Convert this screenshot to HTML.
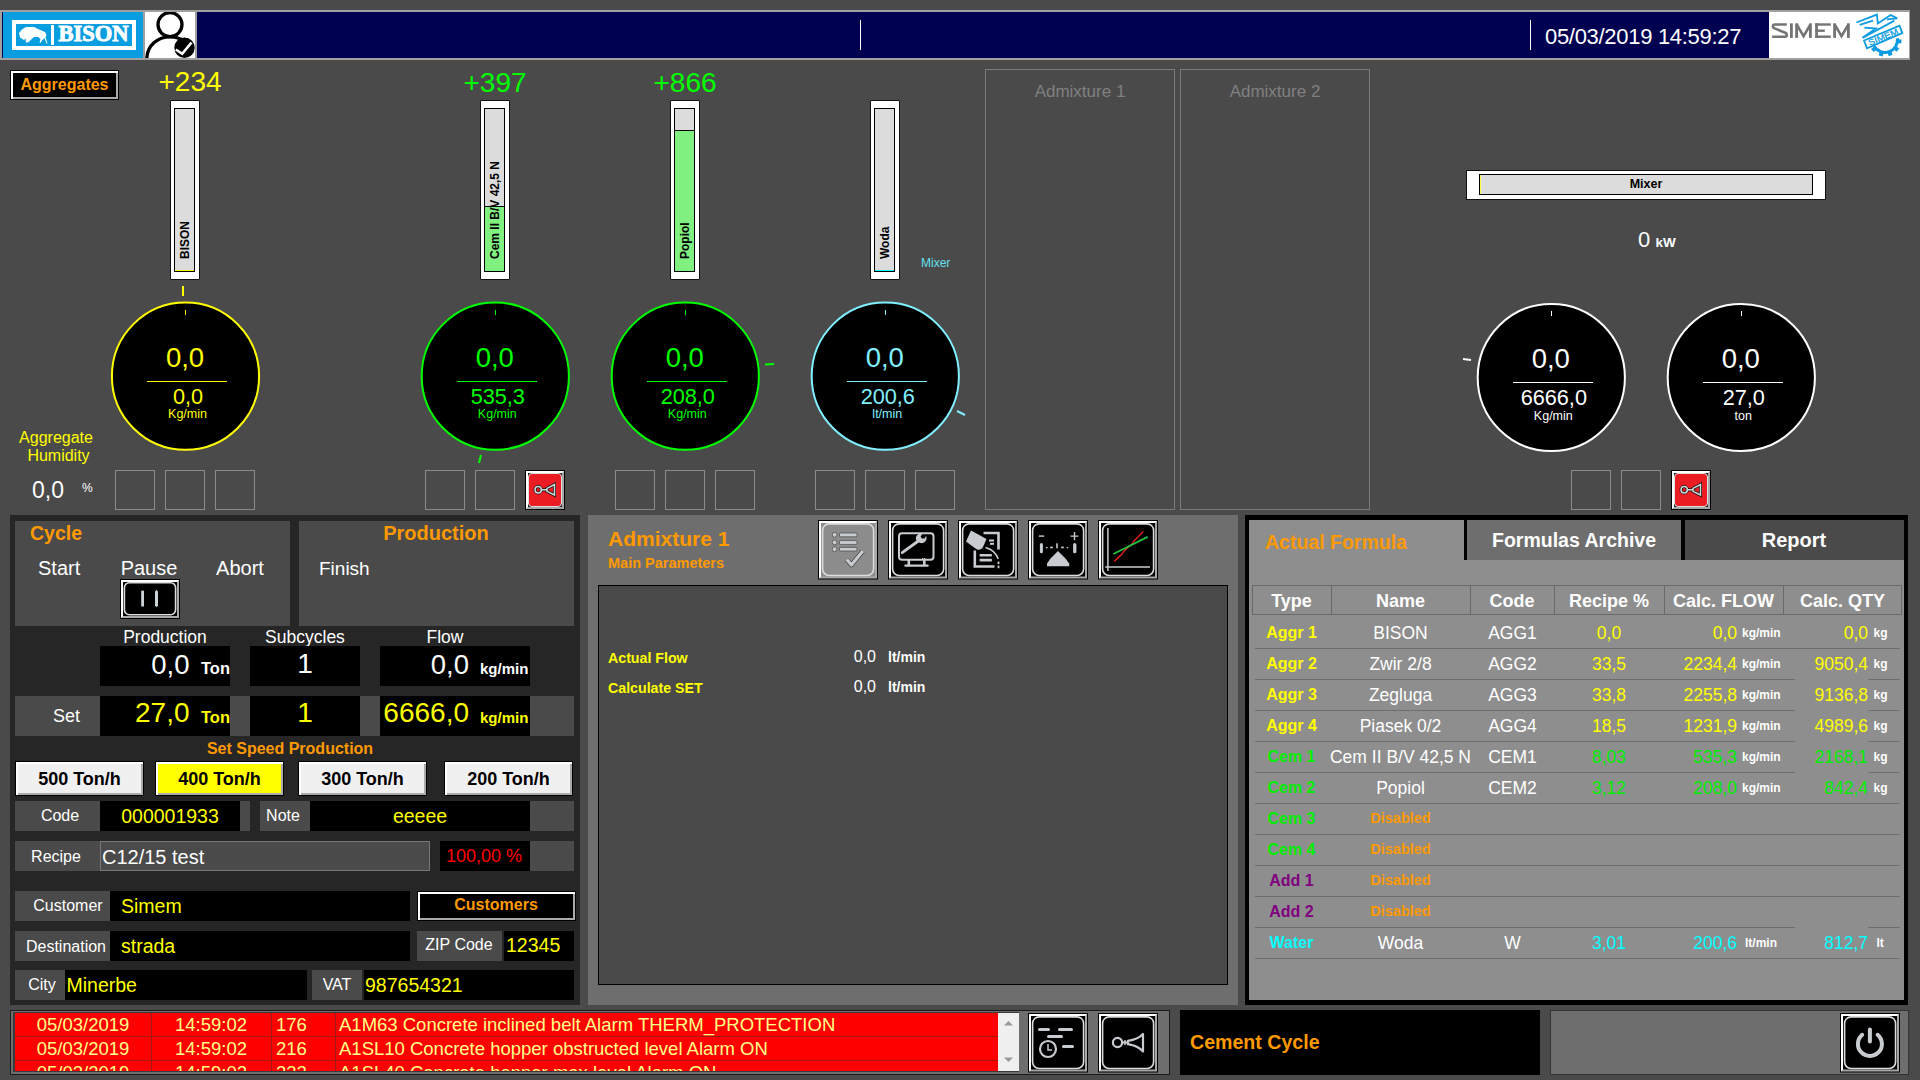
<!DOCTYPE html>
<html><head><meta charset="utf-8"><style>
html,body{margin:0;padding:0;}
body{width:1920px;height:1080px;overflow:hidden;background:#4a4a4a;position:relative;font-family:"Liberation Sans", sans-serif;}
div, svg{position:absolute;}
.t{white-space:nowrap;}
</style></head><body>
<div style="left:0px;top:10px;width:1910px;height:50px;background:#a0a0a0"></div>
<div style="left:2px;top:12px;width:1px;height:46px;background:#000050"></div>
<div style="left:197px;top:12px;width:1572px;height:46px;background:#000050"></div>
<div style="left:3px;top:12px;width:140px;height:46px;background:#0a9ee0"></div>
<div style="left:145px;top:12px;width:50px;height:46px;background:#fff"></div>
<div style="left:1769px;top:12px;width:140px;height:46px;background:#fff"></div>
<div style="left:860px;top:20px;width:1px;height:30px;background:#fff"></div>
<div style="left:1530px;top:20px;width:1px;height:30px;background:#fff"></div>
<div style="left:12px;top:20px;width:124px;height:30px;border:4px solid #fff;box-sizing:border-box"></div>
<div style="left:51px;top:25px;width:3px;height:20px;background:#fff"></div>
<div class="t" style="left:58.5px;top:23.45px;font-size:22.5px;line-height:22.5px;color:#fff;font-weight:bold;font-family:'Liberation Serif',serif;-webkit-text-stroke:0.9px #fff;transform:scaleY(1.05);transform-origin:0 85%">BISON</div>
<svg style="left:0px;top:0px" width="60" height="50" viewBox="0 0 60 50">
<path d="M19 33 L22 29.5 L26 27 L34 27 L39 29.5 L45 32 L46.5 35 L45.5 37 L47.5 43.5 L46.5 43.5 L44.5 38 L42 40.5 L40.5 43 L39.5 42 L40.5 39.5 L38.5 37 L34 37 L28 42.5 L26 42.5 L25.5 38.5 L24 40 L20 37.5 Z" fill="#fff"/>
</svg>
<svg style="left:145px;top:12px" width="50" height="46" viewBox="0 0 50 46">
<circle cx="25" cy="12.6" r="12" fill="none" stroke="#000" stroke-width="3.3"/>
<path d="M1.8 46 C2.5 33 13 24.8 25 24.8 C32 24.8 37 27 41 30" fill="none" stroke="#000" stroke-width="3.3"/>
<circle cx="39.5" cy="35.8" r="10.2" fill="#000"/>
<path d="M30.8 37.5 L37.2 41.8 L46.5 30.5" fill="none" stroke="#fff" stroke-width="2.6"/>
</svg>
<div class="t" style="left:1545px;top:26.38px;font-size:22px;line-height:22px;color:#fff;font-weight:normal;letter-spacing:-0.3px">05/03/2019 14:59:27</div>
<svg style="left:1760px;top:10px" width="95" height="40" viewBox="0 0 95 40">
<g fill="#747474">
<rect x="30" y="13.3" width="2.8" height="14.6"/>
<rect x="35.2" y="13.3" width="2.9" height="14.6"/><rect x="49" y="13.3" width="2.8" height="14.6"/>
<rect x="55.2" y="13.3" width="2.7" height="14.6"/><rect x="55.2" y="13.3" width="15.6" height="2.4"/><rect x="55.2" y="19.5" width="9.6" height="2.4"/><rect x="55.2" y="25.5" width="15.6" height="2.4"/>
<rect x="73.2" y="13.3" width="2.8" height="14.6"/><rect x="87" y="13.3" width="2.8" height="14.6"/>
</g>
<g fill="none" stroke="#747474" stroke-width="2.6">
<path d="M26.8 14.5 H15 C13.3 14.5 12.9 15.4 12.9 16.4 C12.9 17.4 13.4 17.9 14.6 18.4 L25.3 22.8 C26.5 23.3 26.8 24 26.8 25 C26.8 26.3 26.1 26.7 25 26.7 H12.1"/>
<path d="M36.8 14.6 L43.6 26.2 L50.3 14.6"/>
<path d="M74.8 14.6 L81.5 26.2 L88.3 14.6"/>
</g></svg>
<svg style="left:1850px;top:10px" width="60" height="50" viewBox="0 0 60 50">
<g fill="none" stroke="#0b9be0" stroke-width="1.8" stroke-linejoin="miter">
<path d="M6.5 12.5 L26.9 4.6 L27.8 13.4 L40.7 5.1 L47.2 8.3"/>
<path d="M9.7 14.8 L23.1 10.6"/>
<path d="M14.4 17.6 L25.9 18.5 L12.5 27.8"/>
<path d="M13 27.8 L44.4 10.6"/>
<path d="M37 9.3 L47.2 8.3"/>
<path d="M14 30.5 L49.5 15.7 L52.3 23.1 L17 38.4 Z"/>
<path d="M24.2 36.2 A12.5 12.5 0 0 0 47.4 28.3" stroke-width="3"/>
</g>
<g fill="#0b9be0"><rect x="21.9" y="37.3" width="4" height="4" transform="rotate(50 23.9 39.3)"/><rect x="29.2" y="42.0" width="4" height="4" transform="rotate(15 31.2 44.0)"/><rect x="38.0" y="41.6" width="4" height="4" transform="rotate(-20 40.0 43.6)"/><rect x="44.4" y="36.9" width="4" height="4" transform="rotate(-52 46.4 38.9)"/><rect x="47.4" y="29.3" width="4" height="4" transform="rotate(-85 49.4 31.3)"/></g>
<text x="0" y="3" text-anchor="middle" font-family="Liberation Sans" font-size="8.4" font-weight="normal" fill="#0b9be0" stroke="#0b9be0" stroke-width="0.25" transform="translate(33.2 26.9) rotate(-22.6) scale(1.15 1)">SIMEM</text>
</svg>
<div style="left:10px;top:70px;width:109px;height:30px;background:#000;border:1px solid #000;box-shadow:inset 2px 2px 0 #fff, inset -2px -2px 0 #aaaaaa;box-sizing:border-box"></div>
<div class="t" style="left:-35.5px;top:77.46px;width:200px;text-align:center;font-size:16px;line-height:16px;color:#ff9900;font-weight:bold;">Aggregates</div>
<div style="left:170px;top:100px;width:30px;height:180px;background:#fff;border:1px solid #111;box-sizing:border-box;border-radius:1px"></div>
<div style="left:174px;top:108px;width:21px;height:164px;background:#dcdcdc;border:1px solid #000;box-sizing:border-box"></div>
<div class="t" style="left:85px;top:253px;width:200px;height:12px;font-size:12px;line-height:12px;font-weight:bold;color:#000;transform-origin:100px 6px;transform:translate(0,0) rotate(-90deg);"><span style="position:absolute;left:100px;white-space:nowrap">BISON</span></div>
<div style="left:480px;top:100px;width:30px;height:180px;background:#fff;border:1px solid #111;box-sizing:border-box;border-radius:1px"></div>
<div style="left:484px;top:108px;width:21px;height:164px;background:#dcdcdc;border:1px solid #000;box-sizing:border-box"></div>
<div style="left:485px;top:206px;width:19px;height:65px;background:#80f080;border-top:1px solid #000;box-sizing:border-box"></div>
<div class="t" style="left:395px;top:253px;width:200px;height:12px;font-size:12px;line-height:12px;font-weight:bold;color:#000;transform-origin:100px 6px;transform:translate(0,0) rotate(-90deg);"><span style="position:absolute;left:100px;white-space:nowrap">Cem II B/V 42,5 N</span></div>
<div style="left:670px;top:100px;width:30px;height:180px;background:#fff;border:1px solid #111;box-sizing:border-box;border-radius:1px"></div>
<div style="left:674px;top:108px;width:21px;height:164px;background:#dcdcdc;border:1px solid #000;box-sizing:border-box"></div>
<div style="left:675px;top:130px;width:19px;height:141px;background:#80f080;border-top:1px solid #000;box-sizing:border-box"></div>
<div class="t" style="left:585px;top:253px;width:200px;height:12px;font-size:12px;line-height:12px;font-weight:bold;color:#000;transform-origin:100px 6px;transform:translate(0,0) rotate(-90deg);"><span style="position:absolute;left:100px;white-space:nowrap">Popiol</span></div>
<div style="left:870px;top:100px;width:30px;height:180px;background:#fff;border:1px solid #111;box-sizing:border-box;border-radius:1px"></div>
<div style="left:874px;top:108px;width:21px;height:164px;background:#dcdcdc;border:1px solid #000;box-sizing:border-box"></div>
<div class="t" style="left:785px;top:253px;width:200px;height:12px;font-size:12px;line-height:12px;font-weight:bold;color:#000;transform-origin:100px 6px;transform:translate(0,0) rotate(-90deg);"><span style="position:absolute;left:100px;white-space:nowrap">Woda</span></div>
<div style="left:175px;top:270px;width:19px;height:1px;background:#ffff00"></div>
<div style="left:875px;top:270px;width:19px;height:1px;background:#00ffff"></div>
<div class="t" style="left:90.0px;top:68.3px;width:200px;text-align:center;font-size:28px;line-height:28px;color:#ffff00;font-weight:normal;">+234</div>
<div class="t" style="left:395.0px;top:68.8px;width:200px;text-align:center;font-size:28px;line-height:28px;color:#00ff00;font-weight:normal;">+397</div>
<div class="t" style="left:585.0px;top:68.8px;width:200px;text-align:center;font-size:28px;line-height:28px;color:#00ff00;font-weight:normal;">+866</div>
<div class="t" style="left:921px;top:256.84px;font-size:12px;line-height:12px;color:#66e0f0;font-weight:normal;">Mixer</div>
<svg style="left:109px;top:300px" width="152" height="152" viewBox="0 0 152 152">
<circle cx="76.50" cy="76.20" r="73.6" fill="#000" stroke="#ffff00" stroke-width="2"/>
<line x1="76.5" y1="10" x2="76.5" y2="15" stroke="#ffff00" stroke-width="1"/>
<line x1="38" y1="81.5" x2="118" y2="81.5" stroke="#ffff00" stroke-width="1"/>
</svg>
<div class="t" style="left:115.0px;top:343.72px;width:140px;text-align:center;font-size:27.5px;line-height:27.5px;color:#ffff00;font-weight:normal;">0,0</div>
<div class="t" style="left:118.0px;top:385.83px;width:140px;text-align:center;font-size:21.7px;line-height:21.7px;color:#ffff00;font-weight:normal;">0,0</div>
<div class="t" style="left:117.5px;top:408.42px;width:140px;text-align:center;font-size:12.5px;line-height:12.5px;color:#ffff00;font-weight:normal;">Kg/min</div>
<svg style="left:419px;top:300px" width="152" height="152" viewBox="0 0 152 152">
<circle cx="76.30" cy="76.20" r="73.6" fill="#000" stroke="#00ff00" stroke-width="2"/>
<line x1="76.5" y1="10" x2="76.5" y2="15" stroke="#00ff00" stroke-width="1"/>
<line x1="38" y1="81.5" x2="118" y2="81.5" stroke="#00ff00" stroke-width="1"/>
</svg>
<div class="t" style="left:424.8px;top:343.72px;width:140px;text-align:center;font-size:27.5px;line-height:27.5px;color:#00ff00;font-weight:normal;">0,0</div>
<div class="t" style="left:427.8px;top:385.83px;width:140px;text-align:center;font-size:21.7px;line-height:21.7px;color:#00ff00;font-weight:normal;">535,3</div>
<div class="t" style="left:427.3px;top:408.42px;width:140px;text-align:center;font-size:12.5px;line-height:12.5px;color:#00ff00;font-weight:normal;">Kg/min</div>
<svg style="left:609px;top:300px" width="152" height="152" viewBox="0 0 152 152">
<circle cx="76.30" cy="76.20" r="73.6" fill="#000" stroke="#00ff00" stroke-width="2"/>
<line x1="76.5" y1="10" x2="76.5" y2="15" stroke="#00ff00" stroke-width="1"/>
<line x1="38" y1="81.5" x2="118" y2="81.5" stroke="#00ff00" stroke-width="1"/>
</svg>
<div class="t" style="left:614.8px;top:343.72px;width:140px;text-align:center;font-size:27.5px;line-height:27.5px;color:#00ff00;font-weight:normal;">0,0</div>
<div class="t" style="left:617.8px;top:385.83px;width:140px;text-align:center;font-size:21.7px;line-height:21.7px;color:#00ff00;font-weight:normal;">208,0</div>
<div class="t" style="left:617.3px;top:408.42px;width:140px;text-align:center;font-size:12.5px;line-height:12.5px;color:#00ff00;font-weight:normal;">Kg/min</div>
<svg style="left:809px;top:300px" width="152" height="152" viewBox="0 0 152 152">
<circle cx="76.30" cy="76.20" r="73.6" fill="#000" stroke="#80f0ff" stroke-width="2"/>
<line x1="76.5" y1="10" x2="76.5" y2="15" stroke="#80f0ff" stroke-width="1"/>
<line x1="38" y1="81.5" x2="118" y2="81.5" stroke="#80f0ff" stroke-width="1"/>
</svg>
<div class="t" style="left:814.8px;top:343.72px;width:140px;text-align:center;font-size:27.5px;line-height:27.5px;color:#80f0ff;font-weight:normal;">0,0</div>
<div class="t" style="left:817.8px;top:385.83px;width:140px;text-align:center;font-size:21.7px;line-height:21.7px;color:#80f0ff;font-weight:normal;">200,6</div>
<div class="t" style="left:817.3px;top:408.42px;width:140px;text-align:center;font-size:12.5px;line-height:12.5px;color:#80f0ff;font-weight:normal;">lt/min</div>
<svg style="left:1475px;top:301px" width="152" height="152" viewBox="0 0 152 152">
<circle cx="76.30" cy="76.50" r="73.6" fill="#000" stroke="#ffffff" stroke-width="2"/>
<line x1="76.5" y1="10" x2="76.5" y2="15" stroke="#ffffff" stroke-width="1"/>
<line x1="38" y1="81.5" x2="118" y2="81.5" stroke="#ffffff" stroke-width="1"/>
</svg>
<div class="t" style="left:1480.8px;top:345.02px;width:140px;text-align:center;font-size:27.5px;line-height:27.5px;color:#ffffff;font-weight:normal;">0,0</div>
<div class="t" style="left:1483.8px;top:387.13px;width:140px;text-align:center;font-size:21.7px;line-height:21.7px;color:#ffffff;font-weight:normal;">6666,0</div>
<div class="t" style="left:1483.3px;top:409.72px;width:140px;text-align:center;font-size:12.5px;line-height:12.5px;color:#ffffff;font-weight:normal;">Kg/min</div>
<svg style="left:1665px;top:301px" width="152" height="152" viewBox="0 0 152 152">
<circle cx="76.30" cy="76.50" r="73.6" fill="#000" stroke="#ffffff" stroke-width="2"/>
<line x1="76.5" y1="10" x2="76.5" y2="15" stroke="#ffffff" stroke-width="1"/>
<line x1="38" y1="81.5" x2="118" y2="81.5" stroke="#ffffff" stroke-width="1"/>
</svg>
<div class="t" style="left:1670.8px;top:345.02px;width:140px;text-align:center;font-size:27.5px;line-height:27.5px;color:#ffffff;font-weight:normal;">0,0</div>
<div class="t" style="left:1673.8px;top:387.13px;width:140px;text-align:center;font-size:21.7px;line-height:21.7px;color:#ffffff;font-weight:normal;">27,0</div>
<div class="t" style="left:1673.3px;top:409.72px;width:140px;text-align:center;font-size:12.5px;line-height:12.5px;color:#ffffff;font-weight:normal;">ton</div>
<svg style="left:0;top:0" width="1920" height="520" viewBox="0 0 1920 520">
<line x1="183" y1="286" x2="183" y2="296" stroke="#ffff00" stroke-width="2"/>
<line x1="481" y1="455" x2="479" y2="463" stroke="#00ff00" stroke-width="2"/>
<line x1="765" y1="364.5" x2="774" y2="364" stroke="#00ff00" stroke-width="2"/>
<line x1="957" y1="411" x2="965" y2="415" stroke="#80f0ff" stroke-width="2"/>
<line x1="1463" y1="359" x2="1471" y2="360" stroke="#ffffff" stroke-width="2"/>
</svg>
<div style="left:115px;top:470px;width:40px;height:40px;border:1px solid #8a8a8a;box-sizing:border-box"></div>
<div style="left:165px;top:470px;width:40px;height:40px;border:1px solid #8a8a8a;box-sizing:border-box"></div>
<div style="left:215px;top:470px;width:40px;height:40px;border:1px solid #8a8a8a;box-sizing:border-box"></div>
<div style="left:425px;top:470px;width:40px;height:40px;border:1px solid #8a8a8a;box-sizing:border-box"></div>
<div style="left:475px;top:470px;width:40px;height:40px;border:1px solid #8a8a8a;box-sizing:border-box"></div>
<div style="left:615px;top:470px;width:40px;height:40px;border:1px solid #8a8a8a;box-sizing:border-box"></div>
<div style="left:665px;top:470px;width:40px;height:40px;border:1px solid #8a8a8a;box-sizing:border-box"></div>
<div style="left:715px;top:470px;width:40px;height:40px;border:1px solid #8a8a8a;box-sizing:border-box"></div>
<div style="left:815px;top:470px;width:40px;height:40px;border:1px solid #8a8a8a;box-sizing:border-box"></div>
<div style="left:865px;top:470px;width:40px;height:40px;border:1px solid #8a8a8a;box-sizing:border-box"></div>
<div style="left:915px;top:470px;width:40px;height:40px;border:1px solid #8a8a8a;box-sizing:border-box"></div>
<div style="left:1571px;top:470px;width:40px;height:40px;border:1px solid #8a8a8a;box-sizing:border-box"></div>
<div style="left:1621px;top:470px;width:40px;height:40px;border:1px solid #8a8a8a;box-sizing:border-box"></div>
<svg style="left:525px;top:470px" width="40" height="40" viewBox="0 0 40 40">
<rect x="0.5" y="0.5" width="39" height="39" fill="#fff" stroke="#000"/>
<path d="M39 1 V39 H1 L3 37 H37 V3 Z" fill="#a8a8a8"/>
<rect x="3" y="3" width="34" height="34" fill="#1a1a1a"/>
<rect x="3.5" y="3.5" width="33" height="33" rx="3.5" fill="#ec1c24" stroke="#d8e0e0" stroke-width="1"/>
<g fill="none" stroke="#111" stroke-width="3"><circle cx="13.2" cy="19.8" r="3.2"/><path d="M16.5 19.8 H22 M22 18.3 L29.5 14.5 V25 L22 21.3 Z"/></g>
<g fill="none" stroke="#d0dcdc" stroke-width="1.5"><circle cx="13.2" cy="19.8" r="3.2"/><path d="M16.5 19.8 H22 M22 18.3 L29.5 14.5 V25 L22 21.3 Z"/></g>
</svg>
<svg style="left:1671px;top:470px" width="40" height="40" viewBox="0 0 40 40">
<rect x="0.5" y="0.5" width="39" height="39" fill="#fff" stroke="#000"/>
<path d="M39 1 V39 H1 L3 37 H37 V3 Z" fill="#a8a8a8"/>
<rect x="3" y="3" width="34" height="34" fill="#1a1a1a"/>
<rect x="3.5" y="3.5" width="33" height="33" rx="3.5" fill="#ec1c24" stroke="#d8e0e0" stroke-width="1"/>
<g fill="none" stroke="#111" stroke-width="3"><circle cx="13.2" cy="19.8" r="3.2"/><path d="M16.5 19.8 H22 M22 18.3 L29.5 14.5 V25 L22 21.3 Z"/></g>
<g fill="none" stroke="#d0dcdc" stroke-width="1.5"><circle cx="13.2" cy="19.8" r="3.2"/><path d="M16.5 19.8 H22 M22 18.3 L29.5 14.5 V25 L22 21.3 Z"/></g>
</svg>
<div class="t" style="left:-4.0px;top:429.96px;width:120px;text-align:center;font-size:16px;line-height:16px;color:#ffff00;font-weight:normal;">Aggregate</div>
<div class="t" style="left:-1.5px;top:448.46px;width:120px;text-align:center;font-size:16px;line-height:16px;color:#ffff00;font-weight:normal;">Humidity</div>
<div class="t" style="left:32px;top:478.53px;font-size:23px;line-height:23px;color:#fff;font-weight:normal;">0,0</div>
<div class="t" style="left:82px;top:481.84px;font-size:12px;line-height:12px;color:#fff;font-weight:normal;transform:scaleY(1.05)">%</div>
<div style="left:985px;top:69px;width:190px;height:441px;border:1px solid #7a7a7a;box-sizing:border-box"></div>
<div style="left:1180px;top:69px;width:190px;height:441px;border:1px solid #7a7a7a;box-sizing:border-box"></div>
<div class="t" style="left:985.0px;top:83.11px;width:190px;text-align:center;font-size:17px;line-height:17px;color:#808080;font-weight:normal;">Admixture 1</div>
<div class="t" style="left:1180.0px;top:83.11px;width:190px;text-align:center;font-size:17px;line-height:17px;color:#808080;font-weight:normal;">Admixture 2</div>
<div style="left:1466px;top:170px;width:360px;height:30px;background:#fff;border:1px solid #111;box-sizing:border-box"></div>
<div style="left:1479px;top:174px;width:334px;height:21px;background:#dcdcdc;border:1px solid #000;box-sizing:border-box"></div>
<div class="t" style="left:1546.0px;top:178.42px;width:200px;text-align:center;font-size:12.5px;line-height:12.5px;color:#000;font-weight:bold;">Mixer</div>
<div class="t" style="left:1638px;top:228.68px;font-size:22px;line-height:22px;color:#fff;font-weight:normal;">0</div>
<div class="t" style="left:1655.5px;top:235.57px;font-size:13.5px;line-height:13.5px;color:#fff;font-weight:bold;">kW</div>
<div style="left:1480px;top:175px;width:1px;height:19px;background:#ffff40"></div>
<div style="left:10px;top:515px;width:570px;height:490px;background:#262626"></div>
<div style="left:15px;top:521px;width:275px;height:105px;background:#4a4a4a"></div>
<div style="left:299px;top:521px;width:275px;height:105px;background:#4a4a4a"></div>
<div class="t" style="left:30px;top:523.99px;font-size:19.5px;line-height:19.5px;color:#ff9900;font-weight:bold;">Cycle</div>
<div class="t" style="left:38px;top:558.07px;font-size:20px;line-height:20px;color:#fff;font-weight:normal;">Start</div>
<div class="t" style="left:99.0px;top:558.07px;width:100px;text-align:center;font-size:20px;line-height:20px;color:#fff;font-weight:normal;">Pause</div>
<div class="t" style="left:190.0px;top:558.07px;width:100px;text-align:center;font-size:20px;line-height:20px;color:#fff;font-weight:normal;">Abort</div>
<div class="t" style="left:319px;top:558.92px;font-size:19px;line-height:19px;color:#fff;font-weight:normal;">Finish</div>
<div class="t" style="left:336.0px;top:522.57px;width:200px;text-align:center;font-size:20px;line-height:20px;color:#ff9900;font-weight:bold;">Production</div>
<svg style="left:120px;top:579px" width="60" height="40" viewBox="0 0 60 40">
<rect x="0" y="0" width="60" height="40" fill="#000"/>
<rect x="1" y="1" width="58" height="38" fill="#aaa"/>
<path d="M1 1 H59 L57 3 H3 V37 L1 39 Z" fill="#fff"/>
<rect x="3" y="3" width="54" height="34" fill="#000"/>
<rect x="4.4" y="3.7" width="51.2" height="32" rx="5" fill="none" stroke="#dcdcdc" stroke-width="1.6"/>
<rect x="21.2" y="11.7" width="2.8" height="15.8" fill="#ccd4d8"/>
<path d="M36.5 10.8 L38 12.5 V26.5 L36.5 28.2 L35 26.5 V12.5 Z" fill="#ccd4d8"/>
</svg>
<div class="t" style="left:65.0px;top:629.19px;width:200px;text-align:center;font-size:17.5px;line-height:17.5px;color:#fff;font-weight:normal;">Production</div>
<div class="t" style="left:205.0px;top:629.19px;width:200px;text-align:center;font-size:17.5px;line-height:17.5px;color:#fff;font-weight:normal;">Subcycles</div>
<div class="t" style="left:345.0px;top:629.19px;width:200px;text-align:center;font-size:17.5px;line-height:17.5px;color:#fff;font-weight:normal;">Flow</div>
<div style="left:100px;top:646px;width:130px;height:40px;background:#000"></div>
<div style="left:250px;top:646px;width:110px;height:40px;background:#000"></div>
<div style="left:380px;top:646px;width:150px;height:40px;background:#000"></div>
<div class="t" style="left:69.5px;top:650.72px;width:120px;text-align:right;font-size:27.5px;line-height:27.5px;color:#fff;font-weight:normal;">0,0</div>
<div class="t" style="left:201px;top:659.53px;font-size:16.5px;line-height:16.5px;color:#fff;font-weight:bold;">Ton</div>
<div class="t" style="left:255.0px;top:650.3px;width:100px;text-align:center;font-size:28px;line-height:28px;color:#fff;font-weight:normal;">1</div>
<div class="t" style="left:349px;top:650.72px;width:120px;text-align:right;font-size:27.5px;line-height:27.5px;color:#fff;font-weight:normal;">0,0</div>
<div class="t" style="left:480px;top:661.3px;font-size:15px;line-height:15px;color:#fff;font-weight:bold;">kg/min</div>
<div style="left:15px;top:696px;width:559px;height:40px;background:#4a4a4a"></div>
<div style="left:100px;top:696px;width:130px;height:40px;background:#000"></div>
<div style="left:250px;top:696px;width:110px;height:40px;background:#000"></div>
<div style="left:380px;top:696px;width:150px;height:40px;background:#000"></div>
<div class="t" style="left:26.5px;top:707.26px;width:80px;text-align:center;font-size:18px;line-height:18px;color:#fff;font-weight:normal;">Set</div>
<div class="t" style="left:69.5px;top:699.3px;width:120px;text-align:right;font-size:28px;line-height:28px;color:#ffff00;font-weight:normal;">27,0</div>
<div class="t" style="left:201px;top:708.53px;font-size:16.5px;line-height:16.5px;color:#ffff00;font-weight:bold;">Ton</div>
<div class="t" style="left:255.0px;top:699.3px;width:100px;text-align:center;font-size:28px;line-height:28px;color:#ffff00;font-weight:normal;">1</div>
<div class="t" style="left:349px;top:699.3px;width:120px;text-align:right;font-size:28px;line-height:28px;color:#ffff00;font-weight:normal;">6666,0</div>
<div class="t" style="left:480px;top:710.3px;font-size:15px;line-height:15px;color:#ffff00;font-weight:bold;">kg/min</div>
<div class="t" style="left:140.0px;top:741.46px;width:300px;text-align:center;font-size:16px;line-height:16px;color:#ff9900;font-weight:bold;">Set Speed Production</div>
<div style="left:15px;top:761px;width:129px;height:35px;background:#f0f0f0;border:1px solid #000;box-shadow:inset 2px 2px 0 #fff, inset -2px -2px 0 #aaaaaa;box-sizing:border-box"></div>
<div class="t" style="left:15.0px;top:769.76px;width:129px;text-align:center;font-size:18px;line-height:18px;color:#000;font-weight:bold;">500 Ton/h</div>
<div style="left:155px;top:761px;width:129px;height:35px;background:#ffff00;border:1px solid #000;box-shadow:inset 2px 2px 0 #fff, inset -2px -2px 0 #aaaaaa;box-sizing:border-box"></div>
<div class="t" style="left:155.0px;top:769.76px;width:129px;text-align:center;font-size:18px;line-height:18px;color:#000;font-weight:bold;">400 Ton/h</div>
<div style="left:298px;top:761px;width:129px;height:35px;background:#f0f0f0;border:1px solid #000;box-shadow:inset 2px 2px 0 #fff, inset -2px -2px 0 #aaaaaa;box-sizing:border-box"></div>
<div class="t" style="left:298.0px;top:769.76px;width:129px;text-align:center;font-size:18px;line-height:18px;color:#000;font-weight:bold;">300 Ton/h</div>
<div style="left:444px;top:761px;width:129px;height:35px;background:#f0f0f0;border:1px solid #000;box-shadow:inset 2px 2px 0 #fff, inset -2px -2px 0 #aaaaaa;box-sizing:border-box"></div>
<div class="t" style="left:444.0px;top:769.76px;width:129px;text-align:center;font-size:18px;line-height:18px;color:#000;font-weight:bold;">200 Ton/h</div>
<div style="left:15px;top:801px;width:85px;height:30px;background:#4a4a4a"></div>
<div style="left:100px;top:801px;width:140px;height:30px;background:#000"></div>
<div style="left:240px;top:801px;width:10px;height:30px;background:#4a4a4a"></div>
<div style="left:260px;top:801px;width:50px;height:30px;background:#4a4a4a"></div>
<div style="left:310px;top:801px;width:220px;height:30px;background:#000"></div>
<div style="left:530px;top:801px;width:44px;height:30px;background:#4a4a4a"></div>
<div class="t" style="left:17.5px;top:807.96px;width:85px;text-align:center;font-size:16px;line-height:16px;color:#fff;font-weight:normal;">Code</div>
<div class="t" style="left:100.0px;top:807.49px;width:140px;text-align:center;font-size:19.5px;line-height:19.5px;color:#ffff00;font-weight:normal;">000001933</div>
<div class="t" style="left:258.0px;top:807.96px;width:50px;text-align:center;font-size:16px;line-height:16px;color:#fff;font-weight:normal;">Note</div>
<div class="t" style="left:310.0px;top:807.49px;width:220px;text-align:center;font-size:19.5px;line-height:19.5px;color:#ffff00;font-weight:normal;">eeeee</div>
<div style="left:15px;top:841px;width:85px;height:30px;background:#4a4a4a"></div>
<div style="left:100px;top:841px;width:330px;height:30px;background:#4a4a4a;border:1px solid #777;box-sizing:border-box"></div>
<div style="left:440px;top:841px;width:90px;height:30px;background:#000"></div>
<div style="left:530px;top:841px;width:44px;height:30px;background:#4a4a4a"></div>
<div class="t" style="left:13.5px;top:849.46px;width:85px;text-align:center;font-size:16px;line-height:16px;color:#fff;font-weight:normal;">Recipe</div>
<div class="t" style="left:102px;top:846.57px;font-size:20px;line-height:20px;color:#fff;font-weight:normal;">C12/15 test</div>
<div class="t" style="left:439.0px;top:846.76px;width:90px;text-align:center;font-size:18px;line-height:18px;color:#ff0000;font-weight:normal;">100,00 %</div>
<div style="left:15px;top:891px;width:95px;height:30px;background:#4a4a4a"></div>
<div style="left:110px;top:891px;width:300px;height:30px;background:#000"></div>
<div style="left:417px;top:891px;width:159px;height:30px;background:#000;border:1px solid #000;box-shadow:inset 2px 2px 0 #fff, inset -2px -2px 0 #aaaaaa;box-sizing:border-box"></div>
<div class="t" style="left:20.5px;top:898.46px;width:95px;text-align:center;font-size:16px;line-height:16px;color:#fff;font-weight:normal;">Customer</div>
<div class="t" style="left:121px;top:897.49px;font-size:19.5px;line-height:19.5px;color:#ffff00;font-weight:normal;">Simem</div>
<div class="t" style="left:417.0px;top:897.46px;width:158px;text-align:center;font-size:16px;line-height:16px;color:#ff9900;font-weight:bold;">Customers</div>
<div style="left:15px;top:931px;width:95px;height:30px;background:#4a4a4a"></div>
<div style="left:110px;top:931px;width:300px;height:30px;background:#000"></div>
<div style="left:417px;top:931px;width:85px;height:30px;background:#4a4a4a"></div>
<div style="left:504px;top:931px;width:70px;height:30px;background:#000"></div>
<div class="t" style="left:18.5px;top:938.96px;width:95px;text-align:center;font-size:16px;line-height:16px;color:#fff;font-weight:normal;">Destination</div>
<div class="t" style="left:121px;top:937.49px;font-size:19.5px;line-height:19.5px;color:#ffff00;font-weight:normal;">strada</div>
<div class="t" style="left:416.5px;top:937.46px;width:85px;text-align:center;font-size:16px;line-height:16px;color:#fff;font-weight:normal;">ZIP Code</div>
<div class="t" style="left:506px;top:936.49px;font-size:19.5px;line-height:19.5px;color:#ffff00;font-weight:normal;">12345</div>
<div style="left:15px;top:970px;width:50px;height:30px;background:#4a4a4a"></div>
<div style="left:65px;top:970px;width:242px;height:30px;background:#000"></div>
<div style="left:312px;top:970px;width:50px;height:30px;background:#4a4a4a"></div>
<div style="left:364px;top:970px;width:210px;height:30px;background:#000"></div>
<div class="t" style="left:17.0px;top:976.96px;width:50px;text-align:center;font-size:16px;line-height:16px;color:#fff;font-weight:normal;">City</div>
<div class="t" style="left:66.5px;top:975.99px;font-size:19.5px;line-height:19.5px;color:#ffff00;font-weight:normal;">Minerbe</div>
<div class="t" style="left:312.0px;top:976.96px;width:50px;text-align:center;font-size:16px;line-height:16px;color:#fff;font-weight:normal;">VAT</div>
<div class="t" style="left:365px;top:975.99px;font-size:19.5px;line-height:19.5px;color:#ffff00;font-weight:normal;">987654321</div>
<div style="left:588px;top:515px;width:650px;height:490px;background:#6e6e6e"></div>
<div style="left:598px;top:585px;width:630px;height:400px;background:#4a4a4a;border:1px solid #000;box-sizing:border-box"></div>
<div class="t" style="left:608px;top:528.22px;font-size:21px;line-height:21px;color:#ff9900;font-weight:bold;">Admixture 1</div>
<div class="t" style="left:608px;top:555.73px;font-size:14.5px;line-height:14.5px;color:#ff9900;font-weight:bold;">Main Parameters</div>
<div class="t" style="left:608px;top:651.28px;font-size:14.2px;line-height:14.2px;color:#ffff00;font-weight:bold;">Actual Flow</div>
<div class="t" style="left:608px;top:681.28px;font-size:14.2px;line-height:14.2px;color:#ffff00;font-weight:bold;">Calculate SET</div>
<div class="t" style="left:816px;top:649.26px;width:60px;text-align:right;font-size:16px;line-height:16px;color:#fff;font-weight:normal;">0,0</div>
<div class="t" style="left:888px;top:650.15px;font-size:14px;line-height:14px;color:#fff;font-weight:bold;">lt/min</div>
<div class="t" style="left:816px;top:679.26px;width:60px;text-align:right;font-size:16px;line-height:16px;color:#fff;font-weight:normal;">0,0</div>
<div class="t" style="left:888px;top:680.15px;font-size:14px;line-height:14px;color:#fff;font-weight:bold;">lt/min</div>
<svg style="left:818px;top:520px" width="60" height="60" viewBox="0 0 60 60">
<rect x="0" y="0" width="60" height="59.5" fill="#000"/>
<rect x="1" y="1" width="58" height="57.5" fill="#a8a8a8"/>
<path d="M1 1 H59 L57 3 H3 V56.5 L1 58.5 Z" fill="#fff"/>
<rect x="3" y="3" width="54" height="53.5" fill="#8c8c8c"/>
<rect x="4.6" y="3.9" width="51" height="51.6" rx="6.5" fill="#8c8c8c" stroke="#dcdcdc" stroke-width="1.6"/>
<g fill="#c8ccd0" stroke="#444" stroke-width="0.7"><circle cx="16.6" cy="14.8" r="2.4"/><circle cx="16.6" cy="22.4" r="2.4"/><circle cx="16.6" cy="29.2" r="2.4"/>
<rect x="21.5" y="13" width="17.5" height="3.8" rx="0.8"/><rect x="21.5" y="20.6" width="17.5" height="3.8" rx="0.8"/><rect x="21.5" y="27.4" width="17.5" height="3.6" rx="0.8"/></g>
<path d="M28.9 39.6 L33.4 45 L44.8 31" fill="none" stroke="#444" stroke-width="4.6" stroke-linejoin="round"/>
<path d="M28.9 39.6 L33.4 45 L44.8 31" fill="none" stroke="#c8ccd0" stroke-width="3.2" stroke-linejoin="round"/>
</svg>
<svg style="left:888px;top:520px" width="60" height="60" viewBox="0 0 60 60">
<rect x="0" y="0" width="60" height="59.5" fill="#000"/>
<rect x="1" y="1" width="58" height="57.5" fill="#a8a8a8"/>
<path d="M1 1 H59 L57 3 H3 V56.5 L1 58.5 Z" fill="#fff"/>
<rect x="3" y="3" width="54" height="53.5" fill="#000"/>
<rect x="4.6" y="3.9" width="51" height="51.6" rx="6.5" fill="#000" stroke="#dcdcdc" stroke-width="1.6"/>
<rect x="11" y="13.2" width="34.5" height="26.6" rx="3" fill="none" stroke="#c8ccd0" stroke-width="2"/>
<g fill="#c8ccd0"><rect x="16.3" y="44.5" width="24.4" height="2.2" rx="1"/><rect x="19.5" y="40" width="2.6" height="5"/><rect x="35" y="40" width="2.6" height="5"/>
<rect x="34" y="38" width="1.2" height="1.2"/><rect x="36" y="38" width="1.2" height="1.2"/></g>
<path d="M14.2 32.6 L31 20.5" stroke="#c8ccd0" stroke-width="2.8" stroke-linecap="round"/>
<path d="M28.6 20.8 A5 5 0 0 1 34.5 13.6 L32.6 16.4 L33.8 18.6 L36.6 18.4 L38 16 A5 5 0 0 1 31.6 22.8 Z" fill="#c8ccd0"/>
</svg>
<svg style="left:958px;top:520px" width="60" height="60" viewBox="0 0 60 60">
<rect x="0" y="0" width="60" height="59.5" fill="#000"/>
<rect x="1" y="1" width="58" height="57.5" fill="#a8a8a8"/>
<path d="M1 1 H59 L57 3 H3 V56.5 L1 58.5 Z" fill="#fff"/>
<rect x="3" y="3" width="54" height="53.5" fill="#000"/>
<rect x="4.6" y="3.9" width="51" height="51.6" rx="6.5" fill="#000" stroke="#dcdcdc" stroke-width="1.6"/>
<path d="M13 10.5 L28.5 19 L25 27 C23.5 30 20 30.5 17.5 28.5 L8 21.5 Z" fill="#c8ccd0"/>
<path d="M29 23 L25.5 29" stroke="#000" stroke-width="1"/>
<path d="M27.5 27.5 C33 29 38 32 40.2 39" fill="none" stroke="#c8ccd0" stroke-width="1.4"/>
<rect x="39.6" y="41.5" width="1.8" height="2.6" fill="#c8ccd0"/><rect x="39.6" y="45.6" width="1.8" height="2.6" fill="#c8ccd0"/>
<path d="M25.5 13 H40.5 V29.5" fill="none" stroke="#c8ccd0" stroke-width="2.6"/>
<path d="M16.8 30.5 V46.5 H36.5" fill="none" stroke="#c8ccd0" stroke-width="2.6"/>
<rect x="21.5" y="34" width="12.5" height="2.6" rx="1" fill="#c8ccd0"/><rect x="21.5" y="38.8" width="12.5" height="2.6" rx="1" fill="#c8ccd0"/>
<rect x="31" y="19.5" width="5" height="2" fill="#c8ccd0"/><rect x="32" y="22.8" width="4" height="2" fill="#c8ccd0"/>
</svg>
<svg style="left:1028px;top:520px" width="60" height="60" viewBox="0 0 60 60">
<rect x="0" y="0" width="60" height="59.5" fill="#000"/>
<rect x="1" y="1" width="58" height="57.5" fill="#a8a8a8"/>
<path d="M1 1 H59 L57 3 H3 V56.5 L1 58.5 Z" fill="#fff"/>
<rect x="3" y="3" width="54" height="53.5" fill="#000"/>
<rect x="4.6" y="3.9" width="51" height="51.6" rx="6.5" fill="#000" stroke="#dcdcdc" stroke-width="1.6"/>
<g stroke="#c8ccd0" stroke-width="1.4"><path d="M10.8 16.1 H16.2"/><path d="M42.5 16.1 H50.5 M46.5 12 V20.2"/></g>
<g fill="#c8ccd0"><rect x="11.9" y="23.1" width="3" height="10.2" rx="1.5"/><rect x="45.1" y="23.1" width="3.3" height="10.2" rx="1.6"/>
<rect x="18" y="27" width="1.6" height="1.3"/><rect x="22.2" y="26.6" width="2.6" height="1.7"/><rect x="28.2" y="23.3" width="1.6" height="5"/><rect x="33.2" y="26.6" width="2.6" height="1.7"/><rect x="38.6" y="27" width="1.6" height="1.3"/>
<path d="M19 46.2 V43.6 L22.5 38.5 L30 31 L37.5 38.5 L41.2 43.6 V46.2 Z"/></g>
</svg>
<svg style="left:1098px;top:520px" width="60" height="60" viewBox="0 0 60 60">
<rect x="0" y="0" width="60" height="59.5" fill="#000"/>
<rect x="1" y="1" width="58" height="57.5" fill="#a8a8a8"/>
<path d="M1 1 H59 L57 3 H3 V56.5 L1 58.5 Z" fill="#fff"/>
<rect x="3" y="3" width="54" height="53.5" fill="#000"/>
<rect x="4.6" y="3.9" width="51" height="51.6" rx="6.5" fill="#000" stroke="#dcdcdc" stroke-width="1.6"/>
<g fill="none" stroke="#c8ccd0" stroke-width="1.5"><path d="M9.9 8 V51 M7.2 47 H52"/></g>
<path d="M16.1 41.5 L24 34 L26 31 L34 24 L36 21 L45.4 11.4" fill="none" stroke="#ff2020" stroke-width="1.2"/>
<path d="M15.4 34 L49.7 16.9" stroke="#22c040" stroke-width="1.8"/>
</svg>
<div style="left:1245px;top:515px;width:663px;height:490px;background:#000"></div>
<div style="left:1249px;top:520px;width:655px;height:480px;background:#8e8e8e"></div>
<div style="left:1464px;top:520px;width:440px;height:40px;background:#000"></div>
<div style="left:1467px;top:520px;width:214px;height:40px;background:#6e6e6e"></div>
<div style="left:1685px;top:520px;width:219px;height:40px;background:#4a4a4a"></div>
<div class="t" style="left:1265px;top:533.49px;font-size:19.5px;line-height:19.5px;color:#ff9900;font-weight:bold;">Actual Formula</div>
<div class="t" style="left:1467.0px;top:530.99px;width:214px;text-align:center;font-size:19.5px;line-height:19.5px;color:#fff;font-weight:bold;">Formulas Archive</div>
<div class="t" style="left:1684.5px;top:530.07px;width:219px;text-align:center;font-size:20px;line-height:20px;color:#fff;font-weight:bold;">Report</div>
<div style="left:1252px;top:585px;width:650px;height:30px;border:1px solid #6a6a6a;box-sizing:border-box"></div>
<div style="left:1331px;top:585px;width:1px;height:30px;background:#6a6a6a"></div>
<div style="left:1470px;top:585px;width:1px;height:30px;background:#6a6a6a"></div>
<div style="left:1554px;top:585px;width:1px;height:30px;background:#6a6a6a"></div>
<div style="left:1664px;top:585px;width:1px;height:30px;background:#6a6a6a"></div>
<div style="left:1783px;top:585px;width:1px;height:30px;background:#6a6a6a"></div>
<div class="t" style="left:1191.5px;top:591.76px;width:200px;text-align:center;font-size:18px;line-height:18px;color:#fff;font-weight:bold;">Type</div>
<div class="t" style="left:1300.5px;top:591.76px;width:200px;text-align:center;font-size:18px;line-height:18px;color:#fff;font-weight:bold;">Name</div>
<div class="t" style="left:1412.0px;top:591.76px;width:200px;text-align:center;font-size:18px;line-height:18px;color:#fff;font-weight:bold;">Code</div>
<div class="t" style="left:1509.0px;top:591.76px;width:200px;text-align:center;font-size:18px;line-height:18px;color:#fff;font-weight:bold;">Recipe %</div>
<div class="t" style="left:1623.5px;top:591.76px;width:200px;text-align:center;font-size:18px;line-height:18px;color:#fff;font-weight:bold;">Calc. FLOW</div>
<div class="t" style="left:1742.5px;top:591.76px;width:200px;text-align:center;font-size:18px;line-height:18px;color:#fff;font-weight:bold;">Calc. QTY</div>
<div style="left:1255px;top:648px;width:645px;height:1px;background:#6e6e6e"></div>
<div class="t" style="left:1251.5px;top:625.46px;width:80px;text-align:center;font-size:16px;line-height:16px;color:#ffff00;font-weight:bold;">Aggr 1</div>
<div class="t" style="left:1320.5px;top:624.99px;width:160px;text-align:center;font-size:17.5px;line-height:17.5px;color:#fff;font-weight:normal;">BISON</div>
<div class="t" style="left:1470.5px;top:624.99px;width:84px;text-align:center;font-size:17.5px;line-height:17.5px;color:#fff;font-weight:normal;">AGG1</div>
<div class="t" style="left:1554.0px;top:624.99px;width:110px;text-align:center;font-size:17.5px;line-height:17.5px;color:#ffff00;font-weight:normal;">0,0</div>
<div class="t" style="left:1627px;top:624.99px;width:110px;text-align:right;font-size:17.5px;line-height:17.5px;color:#ffff00;font-weight:normal;">0,0</div>
<div class="t" style="left:1742px;top:626.84px;font-size:12px;line-height:12px;color:#fff;font-weight:bold;">kg/min</div>
<div class="t" style="left:1758px;top:624.99px;width:110px;text-align:right;font-size:17.5px;line-height:17.5px;color:#ffff00;font-weight:normal;">0,0</div>
<div class="t" style="left:1873.5px;top:626.84px;font-size:12px;line-height:12px;color:#fff;font-weight:bold;">kg</div>
<div style="left:1255px;top:679px;width:540px;height:1px;background:#6e6e6e"></div>
<div style="left:1868px;top:679px;width:32px;height:1px;background:#6e6e6e"></div>
<div class="t" style="left:1251.5px;top:656.46px;width:80px;text-align:center;font-size:16px;line-height:16px;color:#ffff00;font-weight:bold;">Aggr 2</div>
<div class="t" style="left:1320.5px;top:655.99px;width:160px;text-align:center;font-size:17.5px;line-height:17.5px;color:#fff;font-weight:normal;">Zwir 2/8</div>
<div class="t" style="left:1470.5px;top:655.99px;width:84px;text-align:center;font-size:17.5px;line-height:17.5px;color:#fff;font-weight:normal;">AGG2</div>
<div class="t" style="left:1554.0px;top:655.99px;width:110px;text-align:center;font-size:17.5px;line-height:17.5px;color:#ffff00;font-weight:normal;">33,5</div>
<div class="t" style="left:1627px;top:655.99px;width:110px;text-align:right;font-size:17.5px;line-height:17.5px;color:#ffff00;font-weight:normal;">2234,4</div>
<div class="t" style="left:1742px;top:657.84px;font-size:12px;line-height:12px;color:#fff;font-weight:bold;">kg/min</div>
<div class="t" style="left:1758px;top:655.99px;width:110px;text-align:right;font-size:17.5px;line-height:17.5px;color:#ffff00;font-weight:normal;">9050,4</div>
<div class="t" style="left:1873.5px;top:657.84px;font-size:12px;line-height:12px;color:#fff;font-weight:bold;">kg</div>
<div style="left:1255px;top:710px;width:540px;height:1px;background:#6e6e6e"></div>
<div style="left:1868px;top:710px;width:32px;height:1px;background:#6e6e6e"></div>
<div class="t" style="left:1251.5px;top:687.46px;width:80px;text-align:center;font-size:16px;line-height:16px;color:#ffff00;font-weight:bold;">Aggr 3</div>
<div class="t" style="left:1320.5px;top:686.99px;width:160px;text-align:center;font-size:17.5px;line-height:17.5px;color:#fff;font-weight:normal;">Zegluga</div>
<div class="t" style="left:1470.5px;top:686.99px;width:84px;text-align:center;font-size:17.5px;line-height:17.5px;color:#fff;font-weight:normal;">AGG3</div>
<div class="t" style="left:1554.0px;top:686.99px;width:110px;text-align:center;font-size:17.5px;line-height:17.5px;color:#ffff00;font-weight:normal;">33,8</div>
<div class="t" style="left:1627px;top:686.99px;width:110px;text-align:right;font-size:17.5px;line-height:17.5px;color:#ffff00;font-weight:normal;">2255,8</div>
<div class="t" style="left:1742px;top:688.84px;font-size:12px;line-height:12px;color:#fff;font-weight:bold;">kg/min</div>
<div class="t" style="left:1758px;top:686.99px;width:110px;text-align:right;font-size:17.5px;line-height:17.5px;color:#ffff00;font-weight:normal;">9136,8</div>
<div class="t" style="left:1873.5px;top:688.84px;font-size:12px;line-height:12px;color:#fff;font-weight:bold;">kg</div>
<div style="left:1255px;top:741px;width:540px;height:1px;background:#6e6e6e"></div>
<div style="left:1868px;top:741px;width:32px;height:1px;background:#6e6e6e"></div>
<div class="t" style="left:1251.5px;top:718.46px;width:80px;text-align:center;font-size:16px;line-height:16px;color:#ffff00;font-weight:bold;">Aggr 4</div>
<div class="t" style="left:1320.5px;top:717.99px;width:160px;text-align:center;font-size:17.5px;line-height:17.5px;color:#fff;font-weight:normal;">Piasek 0/2</div>
<div class="t" style="left:1470.5px;top:717.99px;width:84px;text-align:center;font-size:17.5px;line-height:17.5px;color:#fff;font-weight:normal;">AGG4</div>
<div class="t" style="left:1554.0px;top:717.99px;width:110px;text-align:center;font-size:17.5px;line-height:17.5px;color:#ffff00;font-weight:normal;">18,5</div>
<div class="t" style="left:1627px;top:717.99px;width:110px;text-align:right;font-size:17.5px;line-height:17.5px;color:#ffff00;font-weight:normal;">1231,9</div>
<div class="t" style="left:1742px;top:719.84px;font-size:12px;line-height:12px;color:#fff;font-weight:bold;">kg/min</div>
<div class="t" style="left:1758px;top:717.99px;width:110px;text-align:right;font-size:17.5px;line-height:17.5px;color:#ffff00;font-weight:normal;">4989,6</div>
<div class="t" style="left:1873.5px;top:719.84px;font-size:12px;line-height:12px;color:#fff;font-weight:bold;">kg</div>
<div style="left:1255px;top:772px;width:540px;height:1px;background:#6e6e6e"></div>
<div style="left:1868px;top:772px;width:32px;height:1px;background:#6e6e6e"></div>
<div class="t" style="left:1251.5px;top:749.46px;width:80px;text-align:center;font-size:16px;line-height:16px;color:#00ee00;font-weight:bold;">Cem 1</div>
<div class="t" style="left:1320.5px;top:748.99px;width:160px;text-align:center;font-size:17.5px;line-height:17.5px;color:#fff;font-weight:normal;">Cem II B/V 42,5 N</div>
<div class="t" style="left:1470.5px;top:748.99px;width:84px;text-align:center;font-size:17.5px;line-height:17.5px;color:#fff;font-weight:normal;">CEM1</div>
<div class="t" style="left:1554.0px;top:748.99px;width:110px;text-align:center;font-size:17.5px;line-height:17.5px;color:#00ee00;font-weight:normal;">8,03</div>
<div class="t" style="left:1627px;top:748.99px;width:110px;text-align:right;font-size:17.5px;line-height:17.5px;color:#00ee00;font-weight:normal;">535,3</div>
<div class="t" style="left:1742px;top:750.84px;font-size:12px;line-height:12px;color:#fff;font-weight:bold;">kg/min</div>
<div class="t" style="left:1758px;top:748.99px;width:110px;text-align:right;font-size:17.5px;line-height:17.5px;color:#00ee00;font-weight:normal;">2168,1</div>
<div class="t" style="left:1873.5px;top:750.84px;font-size:12px;line-height:12px;color:#fff;font-weight:bold;">kg</div>
<div style="left:1255px;top:803px;width:645px;height:1px;background:#6e6e6e"></div>
<div class="t" style="left:1251.5px;top:780.46px;width:80px;text-align:center;font-size:16px;line-height:16px;color:#00ee00;font-weight:bold;">Cem 2</div>
<div class="t" style="left:1320.5px;top:779.99px;width:160px;text-align:center;font-size:17.5px;line-height:17.5px;color:#fff;font-weight:normal;">Popiol</div>
<div class="t" style="left:1470.5px;top:779.99px;width:84px;text-align:center;font-size:17.5px;line-height:17.5px;color:#fff;font-weight:normal;">CEM2</div>
<div class="t" style="left:1554.0px;top:779.99px;width:110px;text-align:center;font-size:17.5px;line-height:17.5px;color:#00ee00;font-weight:normal;">3,12</div>
<div class="t" style="left:1627px;top:779.99px;width:110px;text-align:right;font-size:17.5px;line-height:17.5px;color:#00ee00;font-weight:normal;">208,0</div>
<div class="t" style="left:1742px;top:781.84px;font-size:12px;line-height:12px;color:#fff;font-weight:bold;">kg/min</div>
<div class="t" style="left:1758px;top:779.99px;width:110px;text-align:right;font-size:17.5px;line-height:17.5px;color:#00ee00;font-weight:normal;">842,4</div>
<div class="t" style="left:1873.5px;top:781.84px;font-size:12px;line-height:12px;color:#fff;font-weight:bold;">kg</div>
<div style="left:1255px;top:834px;width:645px;height:1px;background:#6e6e6e"></div>
<div class="t" style="left:1251.5px;top:811.46px;width:80px;text-align:center;font-size:16px;line-height:16px;color:#00ee00;font-weight:bold;">Cem 3</div>
<div class="t" style="left:1330.5px;top:810.73px;width:140px;text-align:center;font-size:14.5px;line-height:14.5px;color:#ff9900;font-weight:bold;">Disabled</div>
<div style="left:1255px;top:865px;width:645px;height:1px;background:#6e6e6e"></div>
<div class="t" style="left:1251.5px;top:842.46px;width:80px;text-align:center;font-size:16px;line-height:16px;color:#00ee00;font-weight:bold;">Cem 4</div>
<div class="t" style="left:1330.5px;top:841.73px;width:140px;text-align:center;font-size:14.5px;line-height:14.5px;color:#ff9900;font-weight:bold;">Disabled</div>
<div style="left:1255px;top:896px;width:645px;height:1px;background:#6e6e6e"></div>
<div class="t" style="left:1251.5px;top:873.46px;width:80px;text-align:center;font-size:16px;line-height:16px;color:#800080;font-weight:bold;">Add 1</div>
<div class="t" style="left:1330.5px;top:872.73px;width:140px;text-align:center;font-size:14.5px;line-height:14.5px;color:#ff9900;font-weight:bold;">Disabled</div>
<div style="left:1255px;top:927px;width:540px;height:1px;background:#6e6e6e"></div>
<div style="left:1868px;top:927px;width:32px;height:1px;background:#6e6e6e"></div>
<div class="t" style="left:1251.5px;top:904.46px;width:80px;text-align:center;font-size:16px;line-height:16px;color:#800080;font-weight:bold;">Add 2</div>
<div class="t" style="left:1330.5px;top:903.73px;width:140px;text-align:center;font-size:14.5px;line-height:14.5px;color:#ff9900;font-weight:bold;">Disabled</div>
<div style="left:1255px;top:958px;width:645px;height:1px;background:#6e6e6e"></div>
<div class="t" style="left:1251.5px;top:935.46px;width:80px;text-align:center;font-size:16px;line-height:16px;color:#00ffff;font-weight:bold;">Water</div>
<div class="t" style="left:1320.5px;top:934.99px;width:160px;text-align:center;font-size:17.5px;line-height:17.5px;color:#fff;font-weight:normal;">Woda</div>
<div class="t" style="left:1470.5px;top:934.99px;width:84px;text-align:center;font-size:17.5px;line-height:17.5px;color:#fff;font-weight:normal;">W</div>
<div class="t" style="left:1554.0px;top:934.99px;width:110px;text-align:center;font-size:17.5px;line-height:17.5px;color:#00ffff;font-weight:normal;">3,01</div>
<div class="t" style="left:1627px;top:934.99px;width:110px;text-align:right;font-size:17.5px;line-height:17.5px;color:#00ffff;font-weight:normal;">200,6</div>
<div class="t" style="left:1745px;top:936.84px;font-size:12px;line-height:12px;color:#fff;font-weight:bold;">lt/min</div>
<div class="t" style="left:1758px;top:934.99px;width:110px;text-align:right;font-size:17.5px;line-height:17.5px;color:#00ffff;font-weight:normal;">812,7</div>
<div class="t" style="left:1876.5px;top:936.84px;font-size:12px;line-height:12px;color:#fff;font-weight:bold;">lt</div>
<div style="left:10px;top:1010px;width:1160px;height:65px;background:#6e6e6e;border:1px solid #1a1a1a;box-sizing:border-box"></div>
<div style="left:13px;top:1012px;width:1006px;height:60px;background:#3a3a3a"></div>
<div style="left:15px;top:1013px;width:983px;height:58px;overflow:hidden;background:#ff0000">
<div class="t" style="left:0.0px;top:2.84px;width:136px;text-align:center;font-size:18.5px;line-height:18.5px;color:#ffff88;font-weight:normal;">05/03/2019</div>
<div class="t" style="left:136.0px;top:2.84px;width:120px;text-align:center;font-size:18.5px;line-height:18.5px;color:#ffff88;font-weight:normal;">14:59:02</div>
<div class="t" style="left:261px;top:2.84px;font-size:18.5px;line-height:18.5px;color:#ffff88;font-weight:normal;">176</div>
<div class="t" style="left:324px;top:2.84px;font-size:18.5px;line-height:18.5px;color:#ffff88;font-weight:normal;">A1M63 Concrete inclined belt Alarm THERM_PROTECTION</div>
<div class="t" style="left:0.0px;top:26.84px;width:136px;text-align:center;font-size:18.5px;line-height:18.5px;color:#ffff88;font-weight:normal;">05/03/2019</div>
<div class="t" style="left:136.0px;top:26.84px;width:120px;text-align:center;font-size:18.5px;line-height:18.5px;color:#ffff88;font-weight:normal;">14:59:02</div>
<div class="t" style="left:261px;top:26.84px;font-size:18.5px;line-height:18.5px;color:#ffff88;font-weight:normal;">216</div>
<div class="t" style="left:324px;top:26.84px;font-size:18.5px;line-height:18.5px;color:#ffff88;font-weight:normal;">A1SL10 Concrete hopper obstructed level Alarm ON</div>
<div class="t" style="left:0.0px;top:50.84px;width:136px;text-align:center;font-size:18.5px;line-height:18.5px;color:#ffff88;font-weight:normal;">05/03/2019</div>
<div class="t" style="left:136.0px;top:50.84px;width:120px;text-align:center;font-size:18.5px;line-height:18.5px;color:#ffff88;font-weight:normal;">14:59:02</div>
<div class="t" style="left:261px;top:50.84px;font-size:18.5px;line-height:18.5px;color:#ffff88;font-weight:normal;">232</div>
<div class="t" style="left:324px;top:50.84px;font-size:18.5px;line-height:18.5px;color:#ffff88;font-weight:normal;">A1SL40 Concrete hopper max level Alarm ON</div>
<div style="left:0px;top:23px;width:983px;height:1px;background:#a01818"></div>
<div style="left:0px;top:47px;width:983px;height:1px;background:#a01818"></div>
<div style="left:136px;top:0px;width:1px;height:58px;background:#a01818"></div>
<div style="left:256px;top:0px;width:1px;height:58px;background:#a01818"></div>
<div style="left:320px;top:0px;width:1px;height:58px;background:#a01818"></div>
</div>
<div style="left:998px;top:1013px;width:21px;height:58px;background:#f0f0f0"></div>
<svg style="left:998px;top:1013px" width="21" height="58"><path d="M6 12.5 L10.5 8 L15 12.5 Z" fill="#999"/><path d="M6 44.5 L10.5 49 L15 44.5 Z" fill="#999"/></svg>
<svg style="left:1028px;top:1013px" width="60" height="60" viewBox="0 0 60 60">
<rect x="0" y="0" width="60" height="59.5" fill="#000"/>
<rect x="1" y="1" width="58" height="57.5" fill="#a8a8a8"/>
<path d="M1 1 H59 L57 3 H3 V56.5 L1 58.5 Z" fill="#fff"/>
<rect x="3" y="3" width="54" height="53.5" fill="#000"/>
<rect x="4.6" y="3.9" width="51" height="51.6" rx="6.5" fill="#000" stroke="#dcdcdc" stroke-width="1.6"/>
<g fill="#c8ccd0"><rect x="10" y="15" width="12" height="3" rx="1.5"/><rect x="30" y="15" width="15" height="3" rx="1.5"/><rect x="19" y="22" width="16" height="3" rx="1.5"/><rect x="34" y="32" width="12" height="3" rx="1.5"/></g>
<circle cx="20" cy="36" r="8" fill="none" stroke="#c8ccd0" stroke-width="2.2"/><path d="M20 31 V37 H24" fill="none" stroke="#c8ccd0" stroke-width="1.5"/>
</svg>
<svg style="left:1098px;top:1013px" width="60" height="60" viewBox="0 0 60 60">
<rect x="0" y="0" width="60" height="59.5" fill="#000"/>
<rect x="1" y="1" width="58" height="57.5" fill="#a8a8a8"/>
<path d="M1 1 H59 L57 3 H3 V56.5 L1 58.5 Z" fill="#fff"/>
<rect x="3" y="3" width="54" height="53.5" fill="#000"/>
<rect x="4.6" y="3.9" width="51" height="51.6" rx="6.5" fill="#000" stroke="#dcdcdc" stroke-width="1.6"/>
<g fill="none" stroke="#c8ccd0" stroke-width="2.2"><circle cx="19.5" cy="29.5" r="4.6"/><path d="M24.3 29.5 H30"/><path d="M30 27.8 Q40 26.5 45 21 V38.5 Q40 33 30 31.2 Z" stroke-linejoin="round"/><path d="M27 27 V32" stroke-width="1.5"/></g>
</svg>
<div style="left:1180px;top:1010px;width:360px;height:65px;background:#000"></div>
<div class="t" style="left:1190px;top:1033.41px;font-size:19.6px;line-height:19.6px;color:#ff9900;font-weight:bold;">Cement Cycle</div>
<div style="left:1550px;top:1010px;width:359px;height:65px;background:#6e6e6e;border:1px solid #333;box-sizing:border-box"></div>
<svg style="left:1840px;top:1013px" width="60" height="60" viewBox="0 0 60 60">
<rect x="0" y="0" width="60" height="59.5" fill="#000"/>
<rect x="1" y="1" width="58" height="57.5" fill="#a8a8a8"/>
<path d="M1 1 H59 L57 3 H3 V56.5 L1 58.5 Z" fill="#fff"/>
<rect x="3" y="3" width="54" height="53.5" fill="#000"/>
<rect x="4.6" y="3.9" width="51" height="51.6" rx="6.5" fill="#000" stroke="#dcdcdc" stroke-width="1.6"/>
<path d="M22.2 21.8 A12 12 0 1 0 37.6 21.8" fill="none" stroke="#c8ccd0" stroke-width="4" stroke-linecap="round"/><rect x="27.9" y="14.5" width="4" height="16" rx="2" fill="#c8ccd0"/>
</svg>
</body></html>
